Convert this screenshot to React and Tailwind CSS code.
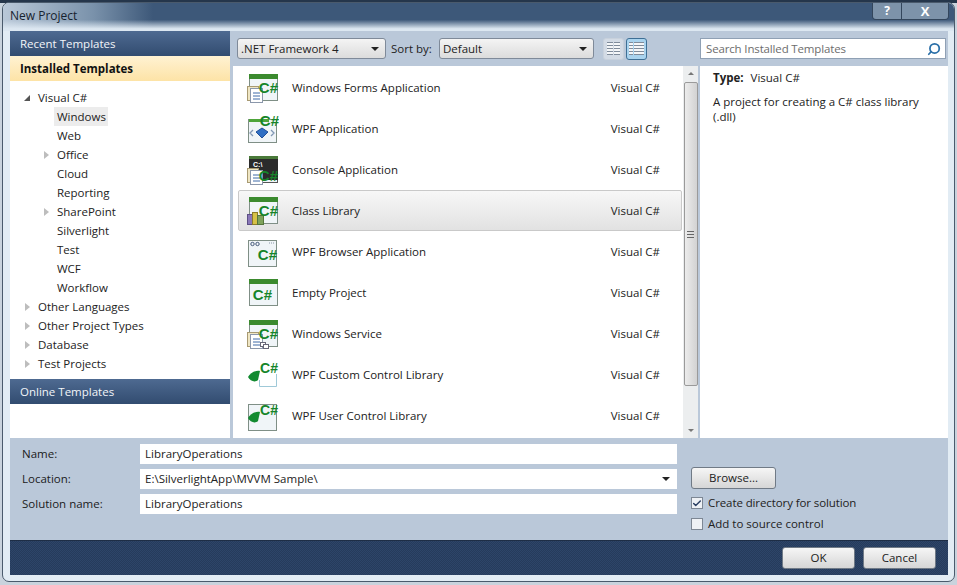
import { Search, Check } from 'lucide-react'

const TREE = [
  { label: 'Windows', selected: true },
  { label: 'Web' },
  { label: 'Office', arrow: true },
  { label: 'Cloud' },
  { label: 'Reporting' },
  { label: 'SharePoint', arrow: true },
  { label: 'Silverlight' },
  { label: 'Test' },
  { label: 'WCF' },
  { label: 'Workflow' },
]

const ROOTS = ['Other Languages', 'Other Project Types', 'Database', 'Test Projects']

const TEMPLATES = [
  { name: 'Windows Forms Application', icon: 'forms' },
  { name: 'WPF Application', icon: 'wpf' },
  { name: 'Console Application', icon: 'console' },
  { name: 'Class Library', icon: 'library', selected: true },
  { name: 'WPF Browser Application', icon: 'browser' },
  { name: 'Empty Project', icon: 'empty' },
  { name: 'Windows Service', icon: 'service' },
  { name: 'WPF Custom Control Library', icon: 'custom' },
  { name: 'WPF User Control Library', icon: 'user' },
]

// where the C# sits inside each 32x32 template icon
const CSHARP = {
  forms: { x: 31, y: 21, size: 15 },
  wpf: { x: 32, y: 13, size: 15 },
  console: { x: 31, y: 27, size: 15 },
  library: { x: 31, y: 21, size: 15 },
  browser: { x: 30, y: 24, size: 15 },
  empty: { x: 25, y: 23, size: 15 },
  service: { x: 31, y: 21, size: 15 },
  custom: { x: 31, y: 14, size: 14 },
  user: { x: 31, y: 15, size: 14 },
}

function Doc() {
  return (
    <g>
      <rect x="0.5" y="14.5" width="11" height="14" fill="#efe6c4" stroke="#a89a72" />
      <rect x="3.5" y="16.5" width="12" height="14" fill="#fff" stroke="#8b97ab" />
      <path d="M6 21h7M6 24h7M6 27h7" stroke="#3e6aa8" />
    </g>
  )
}

function TemplateIcon({ kind }) {
  const band = ['forms', 'library', 'empty', 'service'].includes(kind)
  const pos = CSHARP[kind]
  return (
    <svg width="32" height="32" viewBox="0 0 32 32" className="shrink-0">
      {kind !== 'custom' && (
        <rect
          x={kind === 'wpf' || kind === 'user' || kind === 'browser' ? 1.5 : 2.5}
          y={kind === 'wpf' ? 6.5 : kind === 'user' || kind === 'browser' ? 4.5 : 2.5}
          width="28"
          height={kind === 'wpf' ? 23 : 26}
          fill="#f0f5f8"
          stroke={kind === 'console' ? '#555' : '#7f8f86'}
        />
      )}
      {band && <rect x="2" y="2" width="29" height="5" fill="#3b8a2e" />}
      {kind === 'wpf' && <rect x="2" y="6" width="20" height="3" fill="#4ea53a" />}
      {kind === 'console' && (
        <>
          <rect x="2" y="2" width="29" height="24" fill="#2b2b2b" />
          <rect x="2" y="2" width="29" height="3" fill="#4a7a3a" />
          <text x="6" y="13" fontSize="7" fontWeight="700" fill="#fff" fontFamily="'Liberation Sans', sans-serif">C:\</text>
        </>
      )}
      {kind === 'browser' && (
        <>
          <circle cx="5.5" cy="8" r="1.7" fill="none" stroke="#44597a" />
          <circle cx="10.5" cy="8" r="1.7" fill="none" stroke="#44597a" />
          <path d="M22 7h6" stroke="#8a97a8" strokeDasharray="1 1" />
        </>
      )}
      {kind === 'wpf' && (
        <>
          <path d="M15 15l6 4-6 6-6-6z" fill="#2f6fc4" stroke="#1f4f9a" />
          <path d="M6 17l-3 3 3 3M24 17l3 3-3 3" fill="none" stroke="#7f96b4" strokeWidth="1.3" />
        </>
      )}
      {(kind === 'forms' || kind === 'console') && <Doc />}
      {kind === 'service' && (
        <>
          <Doc />
          <rect x="13.5" y="24.5" width="5" height="4" fill="#fff" stroke="#667" />
          <rect x="16.5" y="26.5" width="5" height="4" fill="#fff" stroke="#667" />
        </>
      )}
      {kind === 'library' && (
        <g>
          <rect x="0.5" y="19.5" width="5" height="10" fill="#8a78b8" stroke="#5d4f86" />
          <rect x="5.5" y="17.5" width="5" height="12" fill="#d7c247" stroke="#8b7c2a" />
          <rect x="10.5" y="20.5" width="6" height="9" fill="#7fa35c" stroke="#55753b" />
        </g>
      )}
      {(kind === 'custom' || kind === 'user') && (
        <>
          {kind === 'custom' && <path d="M12.5 21v6.5h17V15" fill="none" stroke="#9fc9d8" />}
          <path d="M1 18c2-4 8-7 12-6l-2 9c-3 3-8 1-10-3z" fill="#128a30" />
        </>
      )}
      <text
        x={pos.x}
        y={pos.y}
        textAnchor="end"
        fontSize={pos.size}
        fontWeight="700"
        fill="#16852a"
        fontFamily="'Liberation Sans', sans-serif"
      >
        C#
      </text>
    </svg>
  )
}

function Expander({ open }) {
  if (open) {
    return <span className="w-0 h-0 border-l-[6px] border-l-transparent border-b-[6px] border-b-[#555]" />
  }
  return <span className="w-0 h-0 border-y-[4px] border-y-transparent border-l-[5px] border-l-[#bdbdbd]" />
}

function ComboArrow() {
  return <span className="w-0 h-0 border-x-[4px] border-x-transparent border-t-[4px] border-t-[#222]" />
}

function SectionHeader({ children }) {
  return (
    <div className="h-[25px] flex items-center pl-[10px] text-[#f2f5f9] bg-gradient-to-b from-[#4e6a91] to-[#324c70] shrink-0">
      {children}
    </div>
  )
}

function Combo({ width, children }) {
  return (
    <div
      className={`${width} h-[21px] flex items-center justify-between pl-[3px] pr-[6px] rounded-[3px] border border-[#7f8a99] bg-gradient-to-b from-[#f4f4f4] to-[#dcdcdc]`}
    >
      <span>{children}</span>
      <ComboArrow />
    </div>
  )
}

const STRIPES = 'h-[13px] bg-[repeating-linear-gradient(0deg,#7f8b9a_0,#7f8b9a_1px,#f4f6f8_1px,#f4f6f8_3px)]'

function ViewToggle({ active }) {
  return (
    <div
      className={`w-[21px] h-[22px] flex items-center justify-center gap-[1px] rounded-[3px] border ${
        active ? 'border-[#3e6f95] bg-[#a9d3ee]' : 'border-[#c8d1dc] bg-[#d3dbe5]'
      }`}
    >
      <div className={`${active ? 'w-[4px]' : 'w-[6px]'} ${STRIPES}`} />
      <div className={`${active ? 'w-[10px]' : 'w-[6px]'} ${STRIPES}`} />
    </div>
  )
}

function Field({ label, children }) {
  return (
    <div className="flex items-center h-[20px]">
      <span className="w-[118px] shrink-0 text-[#1b1b1b]">{label}</span>
      <div className="w-[537px] h-[20px] bg-white flex items-center justify-between pl-[5px] pr-[7px] text-[#222]">
        {children}
      </div>
    </div>
  )
}

function Button({ width, children }) {
  return (
    <div
      className={`${width} h-[22px] flex items-center justify-center rounded-[3px] border border-[#707a86] bg-gradient-to-b from-[#f6f6f6] to-[#d6d6d6] text-[#1b1b1b]`}
    >
      {children}
    </div>
  )
}

export default function App() {
  return (
    <div className="w-[957px] h-[585px] overflow-hidden pt-[2px] pl-[2px] bg-[linear-gradient(to_bottom,#25364b_0,#25364b_3px,#c9d3dd_3px)] font-['Open_Sans','Noto_Sans',sans-serif] text-[11.5px] leading-none text-[#222]">
      <div className="w-[953px] h-[580px] rounded-[7px] border border-[#4a5a6c] flex flex-col bg-[#e2ecf4] overflow-hidden">
        {/* Title bar */}
        <div className="h-[28px] shrink-0 flex items-start justify-between bg-[linear-gradient(to_bottom,transparent_60%,#dce7f1_92%),linear-gradient(to_right,#b9c8d8_0,#7a92ab_90px,#3d5879_150px,#3d5879_100%)]">
          <span className="mt-[7px] ml-[7px] text-[#16222f] text-[12px]">New Project</span>
          <div className="flex mr-[5px] h-[17px] rounded-b-[4px] border border-t-0 border-[#33465c] overflow-hidden">
            <div className="w-[29px] flex items-center justify-center border-r border-[#33465c] bg-[#7d93aa] text-white font-bold text-[12px]">?</div>
            <div className="w-[46px] flex items-center justify-center bg-[#7d93aa] text-white font-bold text-[13px]">X</div>
          </div>
        </div>

        {/* Dialog body */}
        <div className="ml-[7px] w-[938px] flex flex-col bg-[#bac8d9]">
          <div className="flex h-[407px] shrink-0">
            {/* Left tree */}
            <div className="w-[220px] shrink-0 bg-white flex flex-col">
              <SectionHeader>Recent Templates</SectionHeader>
              <div className="h-[25px] shrink-0 flex items-center pl-[10px] font-bold text-[#111] bg-gradient-to-b from-[#fff2d2] to-[#fde3a6]">
                Installed Templates
              </div>
              <div className="h-[298px] pt-[7px] shrink-0">
                <div className="h-[19px] flex items-center">
                  <span className="w-[28px] pl-[14px] flex"><Expander open /></span>
                  <span>Visual C#</span>
                </div>
                {TREE.map((item) => (
                  <div key={item.label} className="h-[19px] flex items-center">
                    <span className="w-[44px] pl-[34px] flex">{item.arrow && <Expander />}</span>
                    <span className={`h-[19px] px-[3px] flex items-center ${item.selected ? 'w-[54px] bg-[#ececec]' : ''}`}>{item.label}</span>
                  </div>
                ))}
                {ROOTS.map((label) => (
                  <div key={label} className="h-[19px] flex items-center">
                    <span className="w-[28px] pl-[15px] flex"><Expander /></span>
                    <span>{label}</span>
                  </div>
                ))}
              </div>
              <SectionHeader>Online Templates</SectionHeader>
            </div>

            {/* Template list */}
            <div className="w-[465px] shrink-0 ml-[3px] flex flex-col">
              <div className="h-[35px] shrink-0 flex items-center pl-[4px] gap-[5px]">
                <Combo width="w-[149px]">.NET Framework 4</Combo>
                <span className="w-[43px]">Sort by:</span>
                <Combo width="w-[155px]">Default</Combo>
                <div className="flex gap-[2px] ml-[4px]">
                  <ViewToggle />
                  <ViewToggle active />
                </div>
              </div>
              <div className="flex-1 min-h-0 bg-white flex">
                <div className="flex-1 pt-[1px] pl-[5px] pr-[1px]">
                  {TEMPLATES.map((t) => (
                    <div
                      key={t.name}
                      className={`h-[41px] flex items-center pl-[8px] pr-[21px] border ${
                        t.selected
                          ? 'border-[#c9c9c9] rounded-[2px] bg-gradient-to-b from-[#f7f7f7] to-[#e2e2e2]'
                          : 'border-transparent'
                      }`}
                    >
                      <TemplateIcon kind={t.icon} />
                      <span className="ml-[13px] flex-1">{t.name}</span>
                      <span>Visual C#</span>
                    </div>
                  ))}
                </div>
                <div className="w-[15px] shrink-0 bg-[#eceeef] flex flex-col items-center">
                  <span className="mt-[6px] w-0 h-0 border-x-[3px] border-x-transparent border-b-[3px] border-b-[#777]" />
                  <div className="mt-[7px] w-[14px] h-[304px] rounded-[2px] border border-[#9a9a9a] bg-gradient-to-r from-[#ececec] to-[#d2d2d2] flex items-center justify-center">
                    <div className="w-[7px] h-[7px] bg-[repeating-linear-gradient(0deg,#666_0,#666_1px,transparent_1px,transparent_3px)]" />
                  </div>
                  <span className="mt-auto mb-[6px] w-0 h-0 border-x-[3px] border-x-transparent border-t-[3px] border-t-[#777]" />
                </div>
              </div>
            </div>

            {/* Description */}
            <div className="flex-1 min-w-0 ml-[2px] flex flex-col">
              <div className="h-[35px] shrink-0 flex items-center">
                <div className="w-[246px] h-[21px] bg-white border border-[#8fa0b4] flex items-center justify-between pl-[5px] pr-[4px] text-[#6d6d6d]">
                  <span className="tracking-[-0.15px]">Search Installed Templates</span>
                  <Search size={14} strokeWidth={3} className="text-[#2a6fa8] -scale-x-100" />
                </div>
              </div>
              <div className="flex-1 bg-white pl-[13px] pt-[3px]">
                <div className="h-[18px] flex items-center">
                  <b className="mr-[7px] text-[#222]">Type:</b> Visual C#
                </div>
                <div className="mt-[7px] w-[220px] leading-[15px]">A project for creating a C# class library (.dll)</div>
              </div>
            </div>
          </div>

          {/* Name / location */}
          <div className="h-[102px] shrink-0 flex pt-[6px] pl-[12px]">
            <div className="flex flex-col gap-[5px]">
              <Field label="Name:">LibraryOperations</Field>
              <Field label="Location:">
                <span>E:\SilverlightApp\MVVM Sample\</span>
                <ComboArrow />
              </Field>
              <Field label="Solution name:">LibraryOperations</Field>
            </div>
            <div className="ml-[14px] pt-[23px] flex flex-col items-start">
              <Button width="w-[85px]">Browse...</Button>
              <div className="mt-[4px] h-[20px] flex items-center gap-[5px]">
                <span className="w-[12px] h-[12px] border border-[#7d8794] bg-[#eef1f5] flex items-center justify-center">
                  <Check size={11} strokeWidth={3.5} className="text-[#2b3f63]" />
                </span>
                <span className="tracking-[-0.1px]">Create directory for solution</span>
              </div>
              <div className="mt-[1px] h-[20px] flex items-center gap-[5px]">
                <span className="w-[12px] h-[12px] border border-[#7d8794] bg-[#eef1f5]" />
                Add to source control
              </div>
            </div>
          </div>

          {/* Footer */}
          <div className="h-[35px] shrink-0 flex items-start justify-end gap-[8px] pt-[6px] pr-[12px] border-t border-[#1d2d45] bg-[repeating-conic-gradient(#2d4569_0_25%,#263b5b_0_50%)] bg-[length:2px_2px]">
            <Button width="w-[73px]">OK</Button>
            <Button width="w-[73px]">Cancel</Button>
          </div>
        </div>
      </div>
    </div>
  )
}
